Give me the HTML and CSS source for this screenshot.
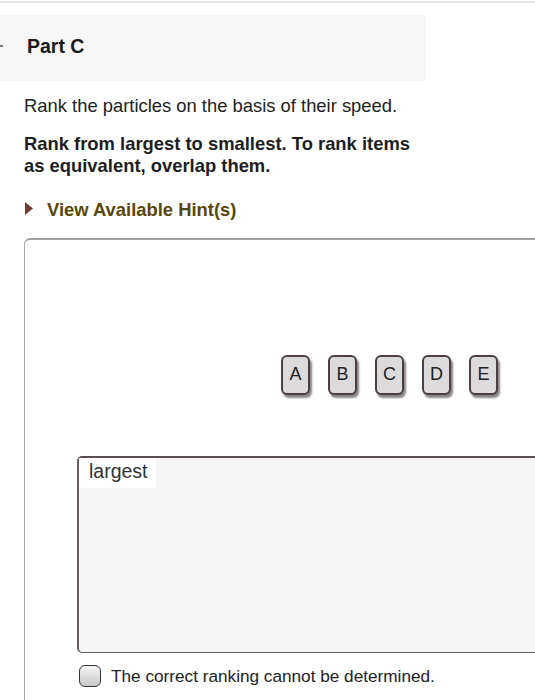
FILE: index.html
```html
<!DOCTYPE html>
<html>
<head>
<meta charset="utf-8">
<link rel="stylesheet" href="styles.css">
</head>
<body>
<div class="topline"></div>
<div class="part-header">
  <span class="caret"></span>
  <h2 class="part-title">Part C</h2>
</div>
<div class="content">
  <p class="prompt">Rank the particles on the basis of their speed.</p>
  <p class="instr">Rank from largest to smallest. To rank items as equivalent, overlap them.</p>
  <div class="hint">
    <svg class="hint-arrow" width="8" height="13" viewBox="0 0 8 13"><polygon points="0,0 8,6.5 0,13" fill="#6e3b35"/></svg>
    <span class="hint-text">View Available Hint(s)</span>
  </div>
  <div class="answer-box">
    <div class="tiles">
      <div class="tile">A</div>
      <div class="tile">B</div>
      <div class="tile">C</div>
      <div class="tile">D</div>
      <div class="tile">E</div>
    </div>
    <div class="rank-area">
      <span class="rank-label">largest</span>
    </div>
    <label class="cannot">
      <span class="checkbox"></span>
      <span class="cannot-text">The correct ranking cannot be determined.</span>
    </label>
  </div>
</div>
</body>
</html>
```

FILE: styles.css
```css
html, body {
  margin: 0;
  padding: 0;
  background: #ffffff;
  overflow: hidden;
}
body {
  font-family: "Liberation Sans", Arial, Helvetica, sans-serif;
  color: #1e1e1e;
  width: 535px;
  height: 700px;
}
.topline {
  height: 2px;
  margin-top: 1px;
  background: #e2e2e2;
}
.part-header {
  margin-top: 12px;
  width: 426px;
  height: 66px;
  background: #f6f6f6;
  display: flex;
  align-items: center;
}
.caret {
  width: 3px;
  height: 2px;
  background: #777;
  margin-top: -5px;
}
.part-title {
  margin: 0 0 3px 24px;
  font-size: 19.5px;
  font-weight: bold;
  color: #1a1a1a;
}
.content {
  padding-left: 24px;
}
.prompt {
  margin: 14px 0 0 0;
  font-size: 18.4px;
  line-height: 22px;
  color: #222;
}
.instr {
  margin: 16px 0 0 0;
  width: 400px;
  font-size: 18.4px;
  line-height: 22px;
  font-weight: bold;
  color: #1e1e1e;
}
.hint {
  margin-top: 22px;
  display: flex;
  align-items: center;
  height: 22px;
}
.hint-arrow {
  margin-left: 1px;
  margin-top: -4px;
}
.hint-text {
  margin-left: 14px;
  font-size: 18.4px;
  font-weight: bold;
  color: #5a4608;
}
.answer-box {
  margin-top: 17px;
  border: 1px solid #a8a8a8;
  border-top: 2px solid #a2a2a2;
  border-right: none;
  border-radius: 6px 0 0 0;
  height: 470px;
  padding-left: 52px;
}
.tiles {
  display: flex;
  gap: 18px;
  padding-left: 204px;
  margin-top: 115px;
}
.tile {
  box-sizing: border-box;
  width: 29px;
  height: 40px;
  border: 2px solid #4b4040;
  border-radius: 6px;
  background: #dcdada;
  box-shadow: 2px 3px 2px rgba(60, 50, 50, 0.6);
  font-size: 18px;
  line-height: 20px;
  color: #222;
  display: flex;
  justify-content: center;
  padding-top: 7px;
}
.rank-area {
  margin-top: 61px;
  box-sizing: border-box;
  height: 197px;
  background: #f5f5f5;
  border-top: 2px solid #5a4f4f;
  border-left: 2px solid #6a5f5f;
  border-bottom: 1px solid #6a5f5f;
  border-radius: 5px 0 0 5px;
  position: relative;
}
.rank-label {
  display: inline-block;
  background: #ffffff;
  padding: 2px 8px 6px 10px;
  font-size: 19.5px;
  line-height: 22px;
  color: #333;
}
.cannot {
  display: flex;
  align-items: center;
  margin-top: 12px;
  margin-left: 2px;
}
.checkbox {
  box-sizing: border-box;
  width: 22px;
  height: 22px;
  border: 1.5px solid #333;
  border-radius: 6px;
  background: linear-gradient(#f4f4f4, #c9c9c9);
}
.cannot-text {
  margin-left: 10px;
  font-size: 17.2px;
  color: #222;
}
```
